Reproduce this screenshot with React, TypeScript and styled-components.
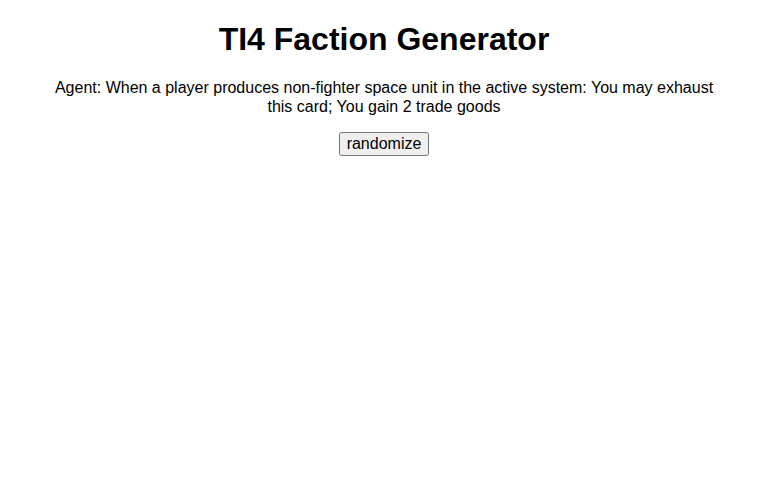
import React, { useState } from 'react';
import styled, { createGlobalStyle } from 'styled-components';

const GlobalStyle = createGlobalStyle`
  body {
    margin: 0;
    background: #ffffff;
    font-family: "Liberation Sans", Arial, sans-serif;
    color: #000000;
  }
`;

const Page = styled.main`
  display: flex;
  flex-direction: column;
  align-items: center;
  text-align: center;
  padding: 21px 40px 0;
`;

const Title = styled.h1`
  font-size: 32px;
  font-weight: bold;
  line-height: 37px;
  margin: 0 0 21px;
`;

const Ability = styled.p`
  font-size: 16px;
  line-height: 18.5px;
  max-width: 680px;
  margin: 0 0 16px;
`;

const RandomButton = styled.button`
  font-family: "Liberation Sans", Arial, sans-serif;
  font-size: 16px;
  line-height: 18px;
  height: 24px;
  padding: 2px 7px;
  color: #000000;
  background: #efefef;
  border: 1px solid #767676;
  border-radius: 3px;
  cursor: pointer;

  &:hover {
    background: #e5e5e5;
  }
`;

const abilities = [
  'Agent: When a player produces non-fighter space unit in the active system: You may exhaust this card; You gain 2 trade goods',
  'Commander: After you gain control of a planet: You may gain 1 trade good',
  'Hero: Action: Purge this card; Each other player gives you 1 trade good',
];

export default function App() {
  const [index, setIndex] = useState(0);

  return (
    <>
      <GlobalStyle />
      <Page>
        <Title>TI4 Faction Generator</Title>
        <Ability>{abilities[index]}</Ability>
        <RandomButton onClick={() => setIndex(Math.floor(Math.random() * abilities.length))}>
          randomize
        </RandomButton>
      </Page>
    </>
  );
}
